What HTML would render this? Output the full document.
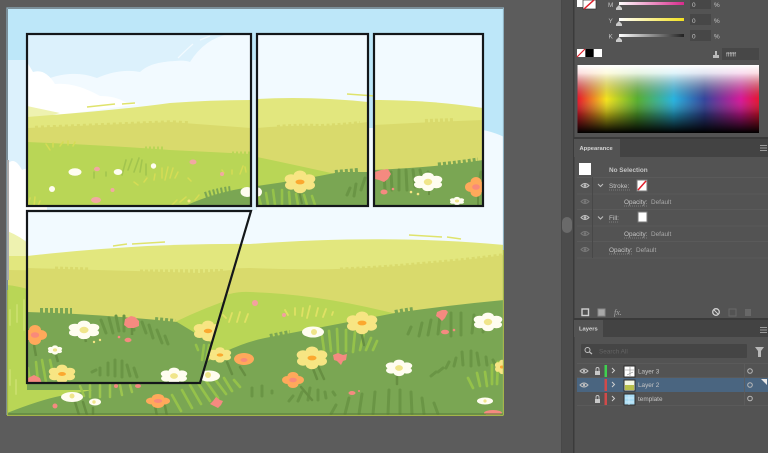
<!DOCTYPE html>
<html><head><meta charset="utf-8"><style>
html,body{margin:0;padding:0;background:#5c5c5c;width:768px;height:453px;overflow:hidden}
svg{display:block;filter:blur(.35px)}
text{font-family:"Liberation Sans",sans-serif;font-size:6.4px;fill:#c4c4c4}
</style></head><body>
<svg width="768" height="453" viewBox="0 0 768 453" xmlns="http://www.w3.org/2000/svg">
<defs>
<linearGradient id="spec" x1="0" x2="1" y1="0" y2="0">
<stop offset="0" stop-color="#e8172c"/><stop offset=".16" stop-color="#f4e41c"/><stop offset=".33" stop-color="#58b030"/><stop offset=".53" stop-color="#28b4e0"/><stop offset=".7" stop-color="#35459c"/><stop offset=".9" stop-color="#d8189a"/><stop offset="1" stop-color="#e81530"/>
</linearGradient>
<linearGradient id="specv" x1="0" x2="0" y1="0" y2="1">
<stop offset="0" stop-color="#fff"/><stop offset=".12" stop-color="#fff" stop-opacity=".85"/><stop offset=".5" stop-color="#808080" stop-opacity="0"/><stop offset=".72" stop-color="#000" stop-opacity=".35"/><stop offset="1" stop-color="#000" stop-opacity="1"/>
</linearGradient>
<g id="fw"><circle cx="0" cy="-.62" r=".42" fill="#fffdf0"/><circle cx=".6" cy="-.28" r=".42" fill="#fffdf0"/><circle cx=".6" cy=".3" r=".4" fill="#fffdf0"/><circle cx="0" cy=".6" r=".42" fill="#fffdf0"/><circle cx="-.6" cy=".3" r=".4" fill="#fffdf0"/><circle cx="-.6" cy="-.28" r=".42" fill="#fffdf0"/><circle r=".6" fill="#fffdf0"/><ellipse rx=".3" ry=".36" fill="#f0e58a"/></g>
<g id="fy"><circle cx="0" cy="-.62" r=".42" fill="#f7e583"/><circle cx=".6" cy="-.28" r=".42" fill="#f7e583"/><circle cx=".6" cy=".3" r=".4" fill="#f7e583"/><circle cx="0" cy=".6" r=".42" fill="#f7e583"/><circle cx="-.6" cy=".3" r=".4" fill="#f7e583"/><circle cx="-.6" cy="-.28" r=".42" fill="#f7e583"/><circle r=".6" fill="#f7e583"/><ellipse rx=".3" ry=".22" fill="#fba82f"/></g>
<g id="fo"><circle cx="0" cy="-.5" r=".5" fill="#ffa95b"/><circle cx=".5" cy="0" r=".5" fill="#ffa95b"/><circle cx="0" cy=".5" r=".5" fill="#ffa95b"/><circle cx="-.5" cy="0" r=".5" fill="#ffa95b"/><circle r=".7" fill="#ffa95b"/><ellipse rx=".35" ry=".28" fill="#f98a7a"/></g>
<clipPath id="ab"><rect x="8" y="9" width="495" height="406"/></clipPath>
<clipPath id="p1"><rect x="27" y="34" width="224" height="172"/></clipPath>
<clipPath id="p2"><rect x="257" y="34" width="111" height="172"/></clipPath>
<clipPath id="p3"><rect x="374" y="34" width="109" height="172"/></clipPath>
<clipPath id="p4"><polygon points="27,211 251,211 200,383 27,383"/></clipPath>
</defs>

<rect width="768" height="453" fill="#5c5c5c"/>

<!-- artboard -->
<g clip-path="url(#ab)">
<rect x="7" y="8" width="497" height="408" fill="#f2faff"/>
<rect x="7" y="8" width="497" height="57" fill="#bde7f9"/>
<rect x="7" y="60" width="250" height="150" fill="#dcf1fc"/>
<path d="M368 8H504V137Q490 130 470 128H368Z" fill="#bde7f9"/>
<rect x="251" y="8" width="120" height="30" fill="#bde7f9"/>
<path d="M7 165Q14 155 22 170Q30 165 40 180V240H7Z" fill="#fff"/>
<rect x="7" y="205" width="40" height="30" fill="#fff"/>
<path d="M7 231Q20 236 30 245L100 260V300H7Z" fill="#eef2b0"/>
<!-- hills -->
<path d="M27 256Q140 243 250 244Q390 234 504 245V420H7V256Z" fill="#e2e77e"/>
<path d="M7 270Q100 272 250 268Q340 272 420 264Q470 260 504 255V420H7Z" fill="#d9da6c"/>
<path d="M340 269.500Q380 268 420 264Q470 260 504 255" fill="none" stroke="#d9da6c" stroke-width="4" stroke-dasharray="3 2.500"/>
<path d="M7 285Q40 288 120 325H180Q215 290 250 292Q320 294 400 315L504 340V420H7Z" fill="#b9d656"/>
<path d="M7 413Q40 400 60 396L190 372Q230 345 265 338L395 313Q450 305 504 300V420H7Z" fill="#7aa653"/>
<path d="M27 322Q80 305 130 314L180 322L200 330L175 390H27Z" fill="#7aa653"/>
<path d="M395 313Q405 311 414 310M270 337L290 333" fill="none" stroke="#7aa653" stroke-width="6" stroke-dasharray="3 2"/>
<!-- grass outside -->
<g fill="none" stroke="#95c24a" stroke-width="2.700" stroke-linecap="round">
<path d="M322 336L324 350M329 331L331 351M337 329L338 352M346 330L346 351M355 332L353 352M364 333L360 350M371 338L366 350M377 341L373 350"/>
<path d="M172 395L181 411M182 390L192 408M190 385L201 404M198 383L210 401M206 381L218 398M214 378L226 394M224 378L232 391M234 380L240 387"/>
<path d="M468 378L473 388M477 373L480 386M485 372L487 386M492 365V384M498 362L497 384"/>
</g>
<g fill="none" stroke="#c8de6a" stroke-width="2" stroke-linecap="round"><path d="M10 310V325M17 305V322M24 300V330M10 370V385M16 380V394"/></g>
<g fill="none" stroke="#9cc54f" stroke-width="2.500" stroke-linecap="round"><path d="M80 386L84 396M90 385V397M100 385V397M110 385V397M120 385L122 395M130 385L132 392"/></g>
<g fill="none" stroke="#dfe164" stroke-width="1.800" stroke-linecap="round"><path d="M285 310L288 315M295 308V315M303 308L302 316M310 306L307 318M318 308L316 316M326 309L323 317M333 312L332 315M223 315L226 318M232 313L229 322M240 312L237 322M248 314L245 322"/></g>
<g fill="none" stroke="#6a9545" stroke-width="3" stroke-linecap="round">
<path d="M408 334L411 327M419 336L422 323M428 335L431 320M438 334L440 316M451 336L451 313M461 335V313M472 333L474 315M483 332L486 316"/>
<path d="M431 376L436 372M438 372L443 368M446 368L449 362M454 366L456 358M463 365L462 352M471 366V351M479 365L477 353M487 365L486 357M495 364L493 360"/>
<path d="M331 414L336 405M345 414L349 398M359 414L362 394M373 414L375 392M388 414L389 390M400 414V390M412 414L411 392M424 414L422 398M438 414L434 403"/>
<path d="M289 401L293 396M298 401L302 392M308 400L310 388M318 400V390M326 398L325 392M335 395L333 392"/>
<path d="M252 396V388M262 396V386M272 393V391"/>
</g>
<g stroke="#678f42" stroke-width="2.500" stroke-linecap="round"><path d="M361 331L364 345M312 366L317 379M318 366L324 379M301 387L312 400M397 375L397 384M227 362L232 374M75 402L79 415M83 402L87 415M240 367L245 375M155 406L157 416M165 406L167 416M93 408V415"/></g>
<!-- flowers -->
<use href="#fy" transform="translate(362 323) scale(15 11)"/>
<ellipse cx="313" cy="332" rx="11" ry="5.500" fill="#fffdf0"/><circle cx="314" cy="332" r="3" fill="#f0e58a"/>
<use href="#fy" transform="translate(312 358) scale(15 11)"/>
<use href="#fo" transform="translate(293 380) scale(11 8)"/>
<path d="M333 355l5-2 5 2 4-1-1 6-3 1-2 4-4-4-3-1z" fill="#f58a80"/>
<path d="M437 312l5-2 4 0 2 2-3 6-3 3-3-3-3-2z" fill="#f58a80"/>
<ellipse cx="445" cy="332" rx="4" ry="2.300" fill="#f58a80"/><circle cx="454" cy="330" r="1.300" fill="#f58a80"/>
<use href="#fw" transform="translate(488 322) scale(14 9)"/>
<use href="#fw" transform="translate(399 368) scale(13 8)"/>
<ellipse cx="485" cy="401" rx="8" ry="3.500" fill="#fffdf0"/><circle cx="485" cy="401" r="1.600" fill="#f0e58a"/>
<ellipse cx="493" cy="413" rx="9" ry="3" fill="#f58a80"/>
<ellipse cx="352" cy="393" rx="3.500" ry="2" fill="#f58a80"/><circle cx="359" cy="391" r="1" fill="#f58a80"/>
<use href="#fy" transform="translate(502 367) scale(7)"/>
<use href="#fy" transform="translate(220 355) scale(11 7.500)"/>
<ellipse cx="244" cy="359" rx="10" ry="6" fill="#ffa95b"/><ellipse cx="244" cy="360" rx="3.500" ry="2" fill="#f98a7a"/>
<ellipse cx="209" cy="376" rx="11" ry="5.500" fill="#fffdf0"/><circle cx="208" cy="375" r="3" fill="#f0e58a"/>
<ellipse cx="72" cy="397" rx="11" ry="5" fill="#fffdf0"/><circle cx="72" cy="396" r="2.500" fill="#f0e58a"/>
<ellipse cx="95" cy="402" rx="6" ry="3.500" fill="#fffdf0"/><circle cx="94" cy="402" r="1.700" fill="#f0e58a"/>
<use href="#fo" transform="translate(158 401) scale(12 7)"/>
<path d="M216 397l4 3 3 1-2 4-3 3-4-2-4-2 3-3z" fill="#f58a80"/>
<circle cx="55" cy="406" r="2.500" fill="#f58a80"/><circle cx="116" cy="386" r="2" fill="#f58a80"/><ellipse cx="138" cy="386" rx="3" ry="2" fill="#f58a80"/>
<circle cx="255" cy="303" r="3" fill="#f4a0a0"/><circle cx="284" cy="315" r="2" fill="#f4a0a0"/>
<!-- bottom line -->
<path d="M8 414H503" stroke="#55783b" stroke-width="1"/>
</g>

<!-- panel 1 -->
<g clip-path="url(#p1)">
<rect x="27" y="34" width="224" height="172" fill="#dcf1fc"/>
<path d="M27 115L40 82Q70 68 97 78Q120 68 140 72Q150 62 175 61Q185 60 190 62Q205 38 230 34H251V120H27Z" fill="#f2faff"/>
<path d="M27 62L33 72Q45 68 55 84Q75 82 100 96Q115 96 125 102L140 104L60 115L27 108Z" fill="#fff"/>
<path d="M27 106L60 113L27 122Z" fill="#eef2b0"/>
<path d="M27 117Q120 110 170 103Q210 100 251 100V206H27Z" fill="#e2e77e"/>
<path d="M27 128Q100 125 170 122Q210 125 251 128V206H27Z" fill="#d9da6c"/>
<path d="M35 127.500Q100 125 170 122L190 123" fill="none" stroke="#d9da6c" stroke-width="3.500" stroke-dasharray="3 3"/>
<path d="M27 142Q100 145 170 150L251 154V206H27Z" fill="#b9d656"/>
<path d="M145 148H165M232 153H250" stroke="#b9d656" stroke-width="3" stroke-dasharray="2 2"/>
<path d="M185 206Q215 192 251 187V206Z" fill="#7aa653"/>
<path d="M205 195Q220 190 232 189" fill="none" stroke="#7aa653" stroke-width="6" stroke-dasharray="2 2"/>
<g fill="none" stroke="#d5dc55" stroke-width="1.500" stroke-linecap="round">
<path d="M46 144L50 150M53 143V147M63 142L60 146M68 141V145M75 142L73 146M144 182L147 178M154 180L155 174M162 168V178M168 167L165 180M173 168L170 178M178 172L175 178M134 182L138 185M188 178L191 181M224 173L222 170M232 174V170M240 174L243 166M246 172L245 167M30 198L28 205M35 197L34 206M40 201L38 206M172 205L177 200M180 202L186 197M195 200L199 195"/>
</g>
<g fill="none" stroke="#a2c44e" stroke-width="1.600" stroke-linecap="round"><path d="M122 175L126 160M128 170L132 159M134 172L139 158M140 172L142 160M146 175L146 164M94 178V172M106 176V172"/></g>
<ellipse cx="75" cy="172" rx="6.500" ry="3.800" fill="#fffdf0"/><ellipse cx="118" cy="172" rx="4.300" ry="3" fill="#fffdf0"/><circle cx="153.500" cy="166" r="2.700" fill="#fffdf0"/><circle cx="52" cy="189" r="3" fill="#fffdf0"/>
<ellipse cx="97" cy="169" rx="3" ry="2.200" fill="#f2a8a2"/><ellipse cx="193" cy="162" rx="3.500" ry="2.500" fill="#f2a8a2"/><circle cx="112.500" cy="190" r="2" fill="#f2a8a2"/><ellipse cx="96" cy="200" rx="5" ry="3" fill="#f2a8a2"/><circle cx="222" cy="174" r="2" fill="#f2a8a2"/>
<circle cx="189" cy="201" r="1.500" fill="#f7e583"/>
<ellipse cx="247" cy="192" rx="6.500" ry="5" fill="#fffdf0"/>
</g>
<path d="M87 107L115 104M122 104L135 103" stroke="#dfe36c" stroke-width="1.500"/>
<path d="M178 58Q186 50 193 44M200 40L210 36" stroke="#f2faff" stroke-width="1.300" fill="none"/>

<!-- panel 2 -->
<g clip-path="url(#p2)">
<rect x="257" y="34" width="111" height="172" fill="#f2faff"/>
<path d="M257 99Q310 96 368 102V206H257Z" fill="#e2e77e"/>
<path d="M257 128Q290 125 320 126Q345 125 368 122V206H257Z" fill="#d9da6c"/>
<path d="M277 127Q300 125 320 126Q345 125 360 123" fill="none" stroke="#d9da6c" stroke-width="4" stroke-dasharray="3 2.500"/>
<path d="M257 157Q300 166 340 175L257 190Z" fill="#b9d656"/>
<path d="M257 186Q300 180 340 172L368 172V206H257Z" fill="#7aa653"/>
<path d="M335 173L358 171" stroke="#7aa653" stroke-width="6" stroke-dasharray="3 2"/>
<g fill="none" stroke="#95c24a" stroke-width="2.600" stroke-linecap="round"><path d="M261 205L258 195M268 205L266 193M275 205L273 190M282 205L282 190M290 205L289 192M298 205L296 194M307 205L304 195M315 205L312 196"/></g>
<g fill="none" stroke="#6a9545" stroke-width="3" stroke-linecap="round"><path d="M347 195L350 188M354 196L356 184M361 190L365 178"/></g>
<path d="M299 190L302 204" stroke="#678f42" stroke-width="2"/>
<use href="#fy" transform="translate(300 182) scale(15 11)"/>
<ellipse cx="258" cy="192" rx="4" ry="4.500" fill="#fffdf0"/>
</g>
<path d="M347 94L375 96M385 97L399 98" stroke="#dfe36c" stroke-width="1.500"/>

<!-- panel 3 -->
<g clip-path="url(#p3)">
<rect x="374" y="34" width="109" height="172" fill="#f2faff"/>
<path d="M374 100Q430 100 483 108V206H374Z" fill="#e2e77e"/>
<path d="M374 125Q430 122 483 120V206H374Z" fill="#d9da6c"/>
<path d="M425 122L455 121" stroke="#d9da6c" stroke-width="6" stroke-dasharray="3 2"/>
<path d="M374 170Q440 167 483 160V206H374Z" fill="#7aa653"/>
<path d="M438 166Q460 164 478 161" fill="none" stroke="#7aa653" stroke-width="7" stroke-dasharray="3 2"/>
<g fill="none" stroke="#6a9545" stroke-width="3" stroke-linecap="round"><path d="M385 190L384 173M392 190L391 172M399 190L399 170M407 190L406 170M415 187L413 170M423 183L420 170M431 180L428 172M478 190L481 172"/></g>
<path d="M429 190V195M478 195V206" stroke="#678f42" stroke-width="2"/>
<path d="M375 172l6-2 7-1 3 5-3 5-4 3-5-2-4-1z" fill="#f58a80"/>
<ellipse cx="384" cy="192" rx="3.500" ry="2.500" fill="#f58a80"/><circle cx="393" cy="189" r="1.300" fill="#f58a80"/>
<circle cx="411" cy="192" r="1.300" fill="#f7e583"/><circle cx="418" cy="194" r="1.300" fill="#f7e583"/>
<use href="#fw" transform="translate(428 182) scale(14 9)"/>
<use href="#fo" transform="translate(476 187) scale(11 10)"/>
<use href="#fw" transform="translate(457 201) scale(7 4)"/>
</g>

<!-- panel 4 -->
<g clip-path="url(#p4)">
<rect x="27" y="211" width="225" height="50" fill="#f2faff"/>
<path d="M27 256Q140 243 252 244V383H27Z" fill="#e2e77e"/>
<path d="M27 268Q100 270 200 273L252 268V383H27Z" fill="#d9da6c"/>
<path d="M55 268.500Q75 269 90 269.500M140 271.500L225 271" fill="none" stroke="#d9da6c" stroke-width="4" stroke-dasharray="3 2"/>
<path d="M175 322Q210 305 252 292V383H175Z" fill="#b9d656"/>
<path d="M27 312Q100 314 177 322L215 345V383H27Z" fill="#7aa653"/>
<path d="M200 358Q215 350 250 340V383H200Z" fill="#7aa653"/>
<path d="M40 311L72 311M155 320L175 322" stroke="#7aa653" stroke-width="6" stroke-dasharray="3 2"/>
<g fill="none" stroke="#6a9545" stroke-width="3" stroke-linecap="round">
<path d="M101 320L106 333M109 318L113 333M116 316L119 331M124 316V331M133 320L134 330M142 322L146 333M149 325L153 338M157 330L162 343M165 336L168 344"/>
<path d="M92 372L96 370M100 375V368M108 375V363M115 376V360M122 377V361M130 376L127 365M137 377L134 368M30 330L32 340"/>
</g>
<g fill="none" stroke="#95c24a" stroke-width="2.600" stroke-linecap="round"><path d="M30 382L28 368M38 382L36 362M46 382L42 360M54 378L50 360M198 350L196 345M204 345L202 360M209 345L206 360"/></g>
<g stroke="#678f42" stroke-width="2.500"><path d="M34 345L36 356M56 355L58 362M85 338L86 342M132 328V335"/></g>
<use href="#fo" transform="translate(35 335) scale(12 10)"/>
<use href="#fw" transform="translate(84 330) scale(15 9)"/>
<use href="#fw" transform="translate(55 350) scale(7 4.500)"/>
<use href="#fy" transform="translate(62 374) scale(13 9)"/>
<path d="M125 319l6-3 4 1 4 4 0 5-5 2-6 0-4-3z" fill="#f58a80"/>
<ellipse cx="128" cy="340" rx="3.500" ry="2.200" fill="#f58a80"/><circle cx="119" cy="337" r="1.300" fill="#f58a80"/>
<circle cx="94" cy="342" r="1.200" fill="#f7e583"/><circle cx="100" cy="340" r="1.200" fill="#f7e583"/>
<use href="#fw" transform="translate(174 376) scale(13 8)"/>
<use href="#fy" transform="translate(208 331) scale(14 10)"/>
<path d="M28 378l6-3 6 3 2 6H28z" fill="#f58a80"/>
</g>
<path d="M113 246L127 244M132 244L165 242" stroke="#dfe36c" stroke-width="1.500"/>
<path d="M409 235L442 237M447 237L461 239" stroke="#dfe36c" stroke-width="1.500"/>

<!-- panel frames -->
<g fill="none" stroke="#14171a" stroke-width="2.200">
<rect x="27" y="34" width="224" height="172"/>
<rect x="257" y="34" width="111" height="172"/>
<rect x="374" y="34" width="109" height="172"/>
<polygon points="27,211 251,211 200,383 27,383"/>
</g>
<!-- artboard edges -->
<path d="M7 415V8H503.500V415" fill="none" stroke="#8eb0c0" stroke-width="1.200"/>
<path d="M7 415.500H503.500M7.500 290V415M503.500 250V415" fill="none" stroke="#a5b54a" stroke-width="1.200"/>
<rect x="7" y="160" width="2" height="120" fill="#aaa"/>
<rect x="504" y="0" width="57" height="453" fill="#5c5c5c"/>
<rect x="0" y="416" width="561" height="37" fill="#5c5c5c"/>

<!-- right column -->
<rect x="561" y="0" width="13" height="453" fill="#4c4c4c"/>
<rect x="573" y="0" width="195" height="453" fill="#535353"/>
<rect x="573" y="0" width="1.500" height="453" fill="#3b3b3b"/>
<rect x="561" y="0" width="1" height="453" fill="#484848"/>
<rect x="562" y="217" width="10" height="16" rx="5" fill="#6a6a6a"/>

<!-- color panel -->
<rect x="577" y="0" width="17" height="7" fill="#fff"/>
<rect x="583" y="0" width="13" height="9" fill="#fff" stroke="#333" stroke-width=".7"/>
<path d="M584 9L594 0" stroke="#e0202c" stroke-width="1.500"/>
<text x="608" y="7" font-size="6.500">M</text><text x="608.500" y="23">Y</text><text x="608.500" y="38.500">K</text>
<defs><linearGradient id="tm"><stop offset="0" stop-color="#fff"/><stop offset="1" stop-color="#d82a8c"/></linearGradient>
<linearGradient id="ty"><stop offset="0" stop-color="#fff"/><stop offset="1" stop-color="#f2e020"/></linearGradient>
<linearGradient id="tk"><stop offset="0" stop-color="#fff"/><stop offset="1" stop-color="#222"/></linearGradient></defs>
<rect x="619" y="2" width="65" height="3" fill="url(#tm)"/><rect x="619" y="18" width="65" height="3" fill="url(#ty)"/><rect x="619" y="34" width="65" height="3" fill="url(#tk)"/>
<g fill="#c9c9c9"><path d="M619 5l3 3v2h-6v-2z"/><path d="M619 21l3 3v2h-6v-2z"/><path d="M619 37l3 3v2h-6v-2z"/></g>
<g fill="#474747"><rect x="690" y="-2" width="21" height="11"/><rect x="690" y="14" width="21" height="11"/><rect x="690" y="30" width="21" height="11"/></g>
<text x="692" y="7">0</text><text x="692" y="23">0</text><text x="692" y="38.500">0</text>
<text x="714" y="7">%</text><text x="714" y="23">%</text><text x="714" y="38.500">%</text>
<rect x="577" y="49" width="8" height="8" fill="#fff"/><path d="M577 57L585 49" stroke="#e0202c" stroke-width="1.200"/>
<rect x="586" y="49" width="7" height="8" fill="#000"/><rect x="594" y="49" width="8" height="8" fill="#fff"/>
<path d="M713 58H719V55H717V51H715V55H713Z" fill="#bbb"/>
<rect x="722" y="48" width="37" height="12" fill="#474747"/><text x="726" y="56.500">ffffff</text>
<rect x="577.500" y="65" width="181.500" height="68" fill="url(#spec)"/>
<rect x="577.500" y="65" width="181.500" height="68" fill="url(#specv)"/>

<!-- Appearance -->
<rect x="574" y="137" width="194" height="2" fill="#3a3a3a"/>
<rect x="574" y="139" width="194" height="18" fill="#434343"/>
<rect x="574" y="139" width="46" height="18" fill="#535353"/>
<text x="579.500" y="150" style="font-size:5.800px;font-weight:bold;fill:#d4d4d4">Appearance</text>
<g fill="#9a9a9a"><rect x="760" y="145" width="7" height="1"/><rect x="760" y="147.500" width="7" height="1"/><rect x="760" y="150" width="7" height="1"/></g>
<rect x="579" y="163" width="12" height="12" fill="#fff"/>
<text x="609" y="172" style="font-weight:bold">No Selection</text>
<g stroke="#5d5d5d" stroke-width=".8"><path d="M577 177.500H768M577 194H768M577 209.500H768M577 226H768M577 241.500H768M577 258H768"/></g>
<rect x="592" y="177" width="1" height="81" fill="#484848"/>
<g><path d="M581 185.500Q585 181.500 589 185.500Q585 189.500 581 185.500Z" fill="none" stroke="#c0c0c0"/><circle cx="585" cy="185.500" r="1.300" fill="#c0c0c0"/></g>
<g transform="translate(0 32)"><path d="M581 185.500Q585 181.500 589 185.500Q585 189.500 581 185.500Z" fill="none" stroke="#c0c0c0"/><circle cx="585" cy="185.500" r="1.300" fill="#c0c0c0"/></g>
<g opacity=".35"><g transform="translate(0 16)"><path d="M581 185.500Q585 181.500 589 185.500Q585 189.500 581 185.500Z" fill="none" stroke="#c0c0c0"/><circle cx="585" cy="185.500" r="1.300" fill="#c0c0c0"/></g>
<g transform="translate(0 48)"><path d="M581 185.500Q585 181.500 589 185.500Q585 189.500 581 185.500Z" fill="none" stroke="#c0c0c0"/><circle cx="585" cy="185.500" r="1.300" fill="#c0c0c0"/></g>
<g transform="translate(0 64)"><path d="M581 185.500Q585 181.500 589 185.500Q585 189.500 581 185.500Z" fill="none" stroke="#c0c0c0"/><circle cx="585" cy="185.500" r="1.300" fill="#c0c0c0"/></g></g>
<path d="M598 184l2.500 2.500 2.500-2.500M598 216.500l2.500 2.500 2.500-2.500" fill="none" stroke="#c0c0c0"/>
<text x="609" y="188">Stroke:</text><path d="M609 190H630" stroke="#aaa" stroke-width=".6" stroke-dasharray="1 1"/>
<rect x="637" y="180" width="10" height="11" fill="#fff" stroke="#777" stroke-width="1"/><path d="M638 190L646 181" stroke="#e0202c" stroke-width="1.500"/>
<text x="624" y="204">Opacity:</text><text x="651" y="204" style="fill:#a8a8a8">Default</text><path d="M624 206H647" stroke="#aaa" stroke-width=".6" stroke-dasharray="1 1"/>
<text x="609" y="220">Fill:</text><path d="M609 222H619" stroke="#aaa" stroke-width=".6" stroke-dasharray="1 1"/>
<rect x="638" y="212" width="9" height="10" fill="#fff" stroke="#777" stroke-width="1"/>
<text x="624" y="236">Opacity:</text><text x="651" y="236" style="fill:#a8a8a8">Default</text><path d="M624 238H647" stroke="#aaa" stroke-width=".6" stroke-dasharray="1 1"/>
<text x="609" y="252">Opacity:</text><text x="636" y="252" style="fill:#a8a8a8">Default</text><path d="M609 254H632" stroke="#aaa" stroke-width=".6" stroke-dasharray="1 1"/>

<!-- appearance footer -->
<rect x="582" y="309" width="6.500" height="6.500" fill="none" stroke="#d0d0d0" stroke-width="1.400"/>
<rect x="598" y="309" width="7" height="7" fill="#a8a8a8" stroke="#8a8a8a"/>
<text x="614" y="315" style="font-family:'Liberation Serif',serif;font-style:italic;font-size:8px;fill:#a8a8a8">fx.</text>
<circle cx="716" cy="312" r="3.300" fill="none" stroke="#d0d0d0" stroke-width="1.300"/><path d="M714 310L718 314" stroke="#d0d0d0"/>
<rect x="729" y="309" width="7" height="7" fill="none" stroke="#686868"/>
<rect x="745" y="309" width="6" height="7" fill="#686868"/>

<!-- Layers -->
<rect x="574" y="318" width="194" height="2" fill="#3a3a3a"/>
<rect x="574" y="320" width="194" height="17" fill="#434343"/>
<rect x="574" y="320" width="29" height="17" fill="#535353"/>
<text x="579" y="330.500" style="font-size:5.800px;font-weight:bold;fill:#d4d4d4">Layers</text>
<g fill="#9a9a9a"><rect x="760" y="327" width="7" height="1"/><rect x="760" y="329.500" width="7" height="1"/><rect x="760" y="332" width="7" height="1"/></g>
<rect x="581" y="344" width="166" height="14" rx="1" fill="#454545"/>
<circle cx="587.500" cy="350" r="2.500" fill="none" stroke="#c0c0c0" stroke-width="1"/><path d="M589.500 352L592 354" stroke="#c0c0c0" stroke-width="1.200"/>
<text x="599" y="353.500" style="fill:#636363">Search All</text>
<path d="M755 347H764L761 351V357H758V351Z" fill="#b8b8b8"/>
<path d="M577 363.500H768M577 377.500H768M577 391.500H768M577 405.500H768" stroke="#5d5d5d" stroke-width=".8"/>
<rect x="577" y="378" width="191" height="14" fill="#4a6580"/>
<g><path d="M580 371Q584 367 588 371Q584 375 580 371Z" fill="none" stroke="#c0c0c0"/><circle cx="584" cy="371" r="1.200" fill="#c0c0c0"/></g>
<g><path d="M580 385Q584 381 588 385Q584 389 580 385Z" fill="none" stroke="#c0c0c0"/><circle cx="584" cy="385" r="1.200" fill="#c0c0c0"/></g>
<g fill="#c8c8c8"><rect x="595" y="371" width="5" height="4"/><rect x="595" y="399" width="5" height="4"/></g>
<path d="M596 371V369a1.500 1.500 0 0 1 3 0V371M596 399V397a1.500 1.500 0 0 1 3 0V399" fill="none" stroke="#c8c8c8" stroke-width=".9"/>
<rect x="604.500" y="365" width="2.500" height="12" fill="#3fd14f"/>
<rect x="604.500" y="379" width="2.500" height="12" fill="#d04a4a"/>
<rect x="604.500" y="393" width="2.500" height="12" fill="#d04a4a"/>
<path d="M612 368l2.500 2.500-2.500 2.500M612 382l2.500 2.500-2.500 2.500M612 396l2.500 2.500-2.500 2.500" fill="none" stroke="#d0d0d0"/>
<rect x="624" y="366" width="11" height="11" fill="#fff" stroke="#2e2e2e"/><path d="M625 370H634M630 366V376M627 375L633 372" stroke="#888" stroke-width=".6"/>
<rect x="624" y="380" width="11" height="11" fill="#f4f8e4" stroke="#2e2e2e"/><rect x="625" y="385" width="9" height="5" fill="#b8c04c"/>
<rect x="624" y="394" width="11" height="11" fill="#a8dcf4" stroke="#2e2e2e"/><path d="M625 398H634M625 402H634M629 395V405" stroke="#d6eefa" stroke-width=".7"/>
<text x="638" y="373.500">Layer 3</text><text x="638" y="387">Layer 2</text><text x="638" y="401">template</text>
<g fill="none" stroke="#b8b8b8"><circle cx="750" cy="371" r="2.300"/><circle cx="750" cy="385" r="2.300"/><circle cx="750" cy="398.500" r="2.300"/></g>
<rect x="744" y="364" width=".8" height="42" fill="#5d5d5d"/>
<path d="M761 379H767V385Z" fill="#e6e6e6"/>
</svg>
</body></html>
